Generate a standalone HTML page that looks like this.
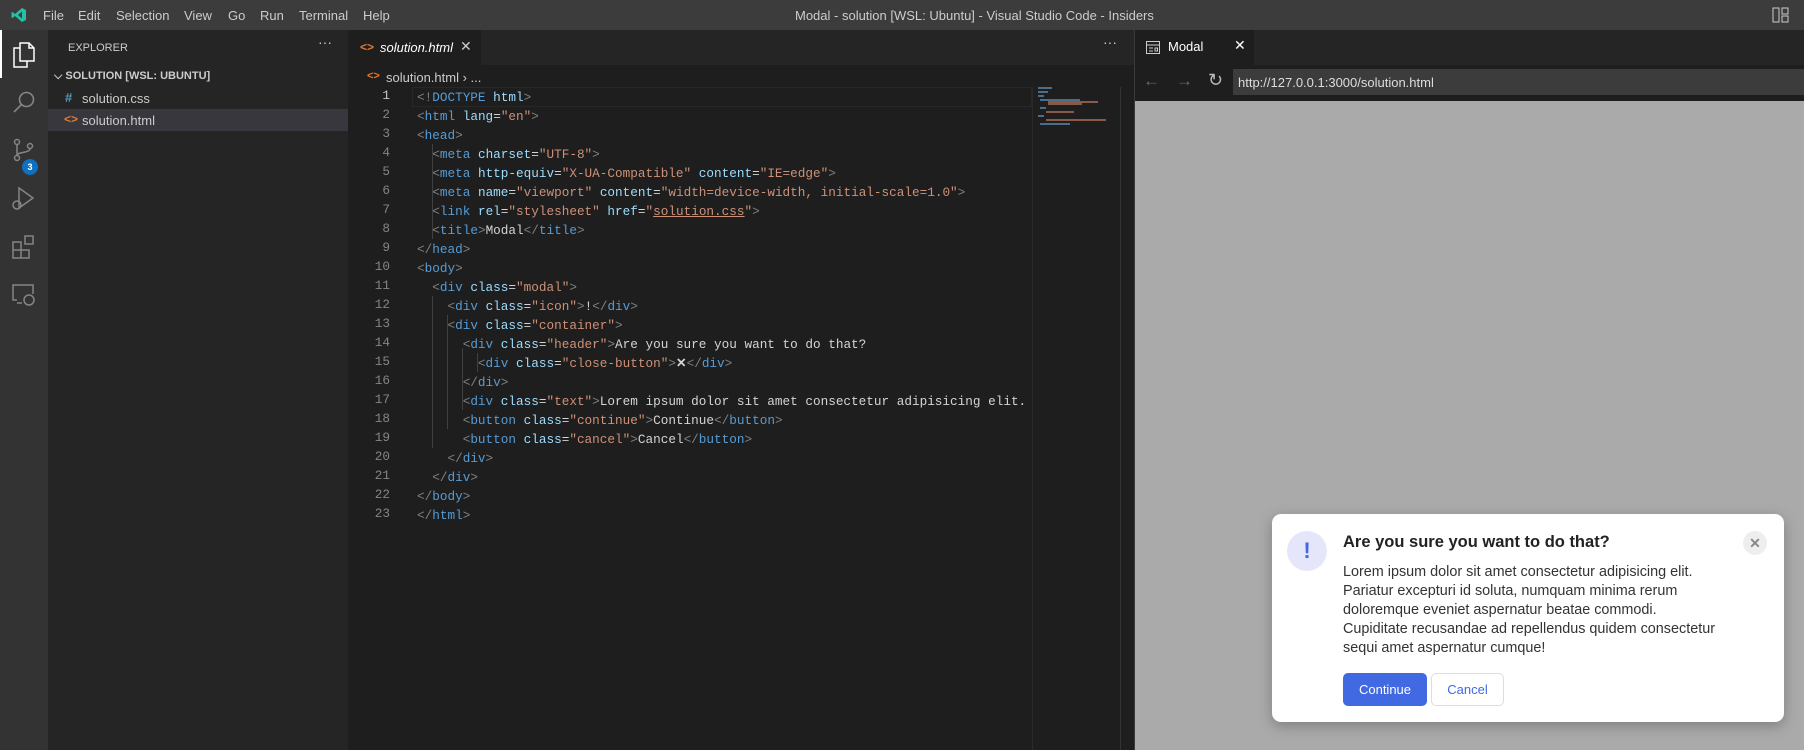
<!DOCTYPE html>
<html><head><meta charset="utf-8"><style>
*{box-sizing:border-box;margin:0;padding:0}
body{width:1804px;height:750px;overflow:hidden;background:#1e1e1e;font-family:"Liberation Sans",sans-serif;position:relative}
.abs{position:absolute}
#title{left:0;top:0;width:1804px;height:30px;background:#3c3c3c;color:#ccc;font-size:13px}
#title span{position:absolute;top:8px}
#act{left:0;top:30px;width:48px;height:720px;background:#333}
#exp{left:48px;top:30px;width:300px;height:720px;background:#252526;color:#ccc;font-size:13px}
#ed{left:348px;top:30px;width:786px;height:720px;background:#1e1e1e}
.code{font-family:"Liberation Mono",monospace;font-size:12.7px;color:#d4d4d4;white-space:pre}
.ln{position:absolute;left:0;width:42px;text-align:right;color:#858585;font-family:"Liberation Mono",monospace;font-size:12.7px}
.t{color:#808080}.n{color:#569cd6}.a{color:#9cdcfe}.s{color:#ce9178}
#br{left:1134px;top:30px;width:670px;height:720px;background:#1e1e1e;border-left:1px solid #3a3a3a}
</style></head><body>
<div id="title" class="abs">
<svg class="abs" style="left:11px;top:7px" width="16" height="16" viewBox="0 0 16 16"><path d="M11 1 L15 3 V13 L11 15 L4 9 L1.5 11 L0.5 10.5 V5.5 L1.5 5 L4 7 Z M11 4.5 L7 8 L11 11.5Z" fill="#24bfa5"/></svg>
<span style="left:43px">File</span><span style="left:78px">Edit</span><span style="left:116px">Selection</span><span style="left:184px">View</span><span style="left:228px">Go</span><span style="left:260px">Run</span><span style="left:299px">Terminal</span><span style="left:363px">Help</span>
<span style="left:795px">Modal - solution [WSL: Ubuntu] - Visual Studio Code - Insiders</span>
<svg class="abs" style="left:1772px;top:7px" width="17" height="16"><rect x="1" y="1" width="6" height="14" fill="none" stroke="#ccc"/><rect x="10" y="1" width="6" height="6" fill="none" stroke="#ccc"/><rect x="10" y="9" width="6" height="6" fill="none" stroke="#ccc"/></svg>
</div>
<div id="act" class="abs">
<div class="abs" style="left:0;top:0;width:2px;height:48px;background:#fff"></div>
<svg class="abs" style="left:12px;top:12px" width="24" height="26" fill="none" stroke="#fff" stroke-width="1.5"><path d="M8 1h9l5 5v13H8z M17 1v5h5"/><path d="M8 6H2v19h13v-6"/></svg>
<svg class="abs" style="left:12px;top:60px" width="24" height="24" fill="none" stroke="#858585" stroke-width="1.6"><circle cx="14.5" cy="9.5" r="7"/><path d="M9.5 14.5L2 22"/></svg>
<svg class="abs" style="left:12px;top:108px" width="24" height="24" fill="none" stroke="#858585" stroke-width="1.5"><circle cx="5" cy="4" r="2.5"/><circle cx="5" cy="20" r="2.5"/><circle cx="18" cy="8" r="2.5"/><path d="M5 6.5v11M18 10.5c0 5-13 3-13 7"/></svg>
<div class="abs" style="left:22px;top:129px;width:16px;height:16px;border-radius:8px;background:#0e70c0;color:#fff;font-size:9px;font-weight:bold;text-align:center;line-height:16px">3</div>
<svg class="abs" style="left:10px;top:156px" width="26" height="26" fill="none" stroke="#858585" stroke-width="1.5"><path d="M9 2v20l14-10z"/><circle cx="7" cy="19" r="4"/></svg>
<svg class="abs" style="left:11px;top:204px" width="26" height="26" fill="none" stroke="#858585" stroke-width="1.5"><path d="M2 8h8v8h8v8H2z M2 16h8v8"/><rect x="14" y="2" width="8" height="8"/></svg>
<svg class="abs" style="left:11px;top:252px" width="26" height="26" fill="none" stroke="#858585" stroke-width="1.5"><path d="M6 18H2V3h20v9"/><path d="M6 21h5"/><circle cx="18" cy="18" r="5"/></svg>
</div>
<div id="exp" class="abs">
<span class="abs" style="left:20px;top:12px;font-size:11px">EXPLORER</span>
<span class="abs" style="left:270px;top:4px;font-size:14px">···</span>
<span class="abs" style="left:6px;top:40px;font-size:11px;font-weight:bold">⌵ SOLUTION [WSL: UBUNTU]</span>
<span class="abs" style="left:17px;top:60px;color:#519aba;font-weight:bold">#</span>
<span class="abs" style="left:34px;top:61px">solution.css</span>
<div class="abs" style="left:0;top:79px;width:300px;height:22px;background:#37373d"></div>
<span class="abs" style="left:16px;top:82px;color:#e37933;font-size:12px;font-weight:bold">&lt;&gt;</span>
<span class="abs" style="left:34px;top:83px">solution.html</span>
</div>
<div id="ed" class="abs">
<div class="abs" style="left:0;top:0;width:786px;height:35px;background:#252526"></div>
<div class="abs" style="left:0;top:0;width:133px;height:35px;background:#1e1e1e"></div>
<span class="abs" style="left:12px;top:10px;color:#e37933;font-size:12px;font-weight:bold">&lt;&gt;</span>
<span class="abs" style="left:32px;top:10px;color:#fff;font-style:italic;font-size:13px">solution.html</span>
<span class="abs" style="left:112px;top:8px;color:#ccc;font-size:14px">✕</span>
<span class="abs" style="left:755px;top:4px;color:#ccc;font-size:14px">···</span>
<span class="abs" style="left:19px;top:40px;color:#e37933;font-size:11px;font-weight:bold">&lt;&gt;</span>
<span class="abs" style="left:38px;top:40px;color:#ccc;font-size:13px">solution.html › ...</span>
<div class="abs" style="left:64px;top:57px;width:620px;height:20px;border:1px solid #282828"></div>
<div class="abs" style="left:0;top:57px;width:684px">
<div class="abs" style="left:84px;top:57px;width:1px;height:95px;background:#404040"></div>
<div class="abs" style="left:84px;top:209px;width:1px;height:152px;background:#404040"></div>
<div class="abs" style="left:99px;top:228px;width:1px;height:114px;background:#404040"></div>
<div class="abs" style="left:114px;top:261px;width:1px;height:62px;background:#404040"></div>
<div class="abs" style="left:129px;top:266px;width:1px;height:19px;background:#404040"></div>
</div>
<div class="abs" style="left:0;top:58px">
<div class="ln" style="top:0;color:#c6c6c6">1</div><div class="ln" style="top:19px">2</div><div class="ln" style="top:38px">3</div><div class="ln" style="top:57px">4</div><div class="ln" style="top:76px">5</div><div class="ln" style="top:95px">6</div><div class="ln" style="top:114px">7</div><div class="ln" style="top:133px">8</div><div class="ln" style="top:152px">9</div><div class="ln" style="top:171px">10</div><div class="ln" style="top:190px">11</div><div class="ln" style="top:209px">12</div><div class="ln" style="top:228px">13</div><div class="ln" style="top:247px">14</div><div class="ln" style="top:266px">15</div><div class="ln" style="top:285px">16</div><div class="ln" style="top:304px">17</div><div class="ln" style="top:323px">18</div><div class="ln" style="top:342px">19</div><div class="ln" style="top:361px">20</div><div class="ln" style="top:380px">21</div><div class="ln" style="top:399px">22</div><div class="ln" style="top:418px">23</div>
<div class="abs code" style="left:69px;top:0;line-height:19px"><span class="t">&lt;!</span><span class="n">DOCTYPE</span> <span class="a">html</span><span class="t">&gt;</span>
<span class="t">&lt;</span><span class="n">html</span> <span class="a">lang</span>=<span class="s">"en"</span><span class="t">&gt;</span>
<span class="t">&lt;</span><span class="n">head</span><span class="t">&gt;</span>
  <span class="t">&lt;</span><span class="n">meta</span> <span class="a">charset</span>=<span class="s">"UTF-8"</span><span class="t">&gt;</span>
  <span class="t">&lt;</span><span class="n">meta</span> <span class="a">http-equiv</span>=<span class="s">"X-UA-Compatible"</span> <span class="a">content</span>=<span class="s">"IE=edge"</span><span class="t">&gt;</span>
  <span class="t">&lt;</span><span class="n">meta</span> <span class="a">name</span>=<span class="s">"viewport"</span> <span class="a">content</span>=<span class="s">"width=device-width, initial-scale=1.0"</span><span class="t">&gt;</span>
  <span class="t">&lt;</span><span class="n">link</span> <span class="a">rel</span>=<span class="s">"stylesheet"</span> <span class="a">href</span>=<span class="s">"<u>solution.css</u>"</span><span class="t">&gt;</span>
  <span class="t">&lt;</span><span class="n">title</span><span class="t">&gt;</span>Modal<span class="t">&lt;/</span><span class="n">title</span><span class="t">&gt;</span>
<span class="t">&lt;/</span><span class="n">head</span><span class="t">&gt;</span>
<span class="t">&lt;</span><span class="n">body</span><span class="t">&gt;</span>
  <span class="t">&lt;</span><span class="n">div</span> <span class="a">class</span>=<span class="s">"modal"</span><span class="t">&gt;</span>
    <span class="t">&lt;</span><span class="n">div</span> <span class="a">class</span>=<span class="s">"icon"</span><span class="t">&gt;</span>!<span class="t">&lt;/</span><span class="n">div</span><span class="t">&gt;</span>
    <span class="t">&lt;</span><span class="n">div</span> <span class="a">class</span>=<span class="s">"container"</span><span class="t">&gt;</span>
      <span class="t">&lt;</span><span class="n">div</span> <span class="a">class</span>=<span class="s">"header"</span><span class="t">&gt;</span>Are you sure you want to do that?
        <span class="t">&lt;</span><span class="n">div</span> <span class="a">class</span>=<span class="s">"close-button"</span><span class="t">&gt;</span><b>✕</b><span class="t">&lt;/</span><span class="n">div</span><span class="t">&gt;</span>
      <span class="t">&lt;/</span><span class="n">div</span><span class="t">&gt;</span>
      <span class="t">&lt;</span><span class="n">div</span> <span class="a">class</span>=<span class="s">"text"</span><span class="t">&gt;</span>Lorem ipsum dolor sit amet consectetur adipisicing elit.
      <span class="t">&lt;</span><span class="n">button</span> <span class="a">class</span>=<span class="s">"continue"</span><span class="t">&gt;</span>Continue<span class="t">&lt;/</span><span class="n">button</span><span class="t">&gt;</span>
      <span class="t">&lt;</span><span class="n">button</span> <span class="a">class</span>=<span class="s">"cancel"</span><span class="t">&gt;</span>Cancel<span class="t">&lt;/</span><span class="n">button</span><span class="t">&gt;</span>
    <span class="t">&lt;/</span><span class="n">div</span><span class="t">&gt;</span>
  <span class="t">&lt;/</span><span class="n">div</span><span class="t">&gt;</span>
<span class="t">&lt;/</span><span class="n">body</span><span class="t">&gt;</span>
<span class="t">&lt;/</span><span class="n">html</span><span class="t">&gt;</span></div>
</div>
<div class="abs" style="left:684px;top:57px;width:88px;height:663px;background:#1e1e1e;border-left:1px solid #2a2a2a"></div>
<div class="abs" style="left:772px;top:57px;width:1px;height:663px;background:#333"></div>
<svg class="abs" style="left:688px;top:57px" width="80" height="40"><g fill="#4a6d8c"><rect x="2" y="0" width="14" height="2"/><rect x="2" y="4" width="10" height="2"/><rect x="2" y="8" width="6" height="2"/><rect x="4" y="12" width="40" height="2"/><rect x="4" y="20" width="6" height="2"/><rect x="2" y="28" width="6" height="2"/><rect x="4" y="36" width="30" height="2"/></g><g fill="#8a5a48"><rect x="12" y="16" width="34" height="2"/><rect x="12" y="14" width="50" height="2"/><rect x="10" y="24" width="28" height="2"/><rect x="10" y="32" width="60" height="2"/></g></svg>
</div>
<div id="br" class="abs">
<div class="abs" style="left:0;top:0;width:670px;height:35px;background:#252526"></div>
<div class="abs" style="left:0;top:0;width:119px;height:35px;background:#1e1e1e"></div>
<svg class="abs" style="left:11px;top:11px" width="14" height="13" fill="none" stroke="#ccc"><rect x="0.5" y="0.5" width="13" height="12"/><path d="M0.5 4h13M3 7h4M3 10h4"/><rect x="9" y="7" width="2.5" height="3"/></svg>
<span class="abs" style="left:33px;top:9px;color:#fff;font-size:13px">Modal</span>
<span class="abs" style="left:99px;top:7px;color:#fff;font-size:14px">✕</span>
<div class="abs" style="left:0;top:35px;width:670px;height:36px;background:#1e1e1e"></div>
<span class="abs" style="left:8px;top:41px;color:#6b6b6b;font-size:17px">←</span>
<span class="abs" style="left:41px;top:41px;color:#6b6b6b;font-size:17px">→</span>
<span class="abs" style="left:73px;top:40px;color:#bbb;font-size:18px">↻</span>
<div class="abs" style="left:98px;top:39px;width:572px;height:26px;background:#3c3c3c"></div>
<span class="abs" style="left:103px;top:45px;color:#ddd;font-size:13px">http://127.0.0.1:3000/solution.html</span>
<div class="abs" style="left:0;top:71px;width:670px;height:649px;background:#aaa"></div>
<div class="abs" style="left:137px;top:484px;width:512px;height:208px;background:#fff;border-radius:9px;box-shadow:0 4px 14px rgba(0,0,0,.25)">
<div class="abs" style="left:15px;top:17px;width:40px;height:40px;border-radius:20px;background:#e6e6fa;color:#4169e1;font-size:22px;font-weight:bold;text-align:center;line-height:40px">!</div>
<div class="abs" style="left:71px;top:19px;font-size:16.5px;font-weight:bold;color:#222">Are you sure you want to do that?</div>
<div class="abs" style="left:471px;top:17px;width:24px;height:24px;border-radius:12px;background:#eee;color:#888;font-size:14px;text-align:center;line-height:24px;font-weight:bold">✕</div>
<div class="abs" style="left:71px;top:49px;font-size:14.4px;line-height:19px;color:#333;white-space:nowrap">Lorem ipsum dolor sit amet consectetur adipisicing elit.<br>Pariatur excepturi id soluta, numquam minima rerum<br>doloremque eveniet aspernatur beatae commodi.<br>Cupiditate recusandae ad repellendus quidem consectetur<br>sequi amet aspernatur cumque!</div>
<div class="abs" style="left:71px;top:159px;width:84px;height:33px;border-radius:5px;background:#4169e1;color:#fff;font-size:13px;text-align:center;line-height:33px">Continue</div>
<div class="abs" style="left:159px;top:159px;width:73px;height:33px;border-radius:5px;border:1px solid #ddd;color:#4169e1;font-size:13px;text-align:center;line-height:31px">Cancel</div>
</div>
</div>
</body></html>
